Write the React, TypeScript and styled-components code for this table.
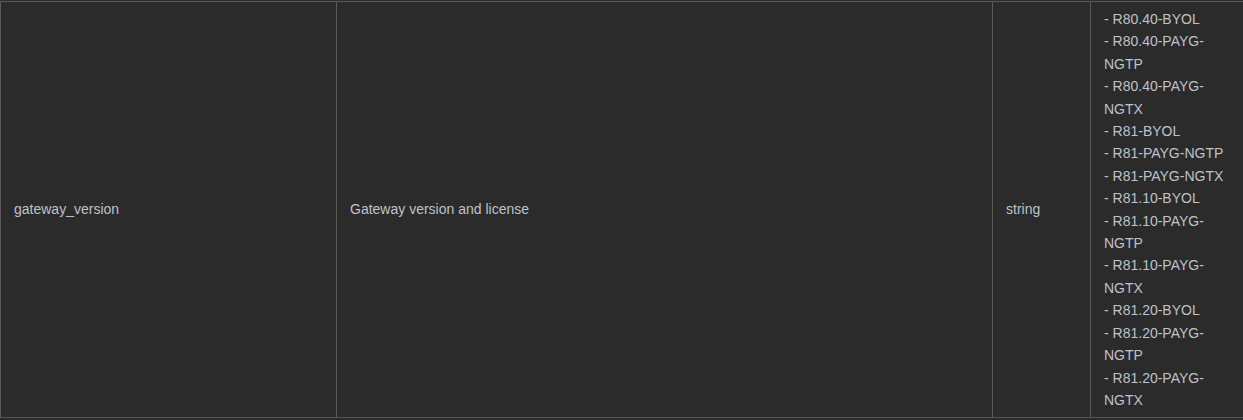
import React from "react";
import styled, { createGlobalStyle } from "styled-components";

const Global = createGlobalStyle`
  html, body {
    margin: 0;
    padding: 0;
    background: #2b2b2b;
    overflow: hidden;
  }
  body {
    padding: 1px 0 0 0;
    font-family: "Liberation Sans", Arial, sans-serif;
  }
`;

const Table = styled.table`
  border-collapse: collapse;
  table-layout: fixed;
  width: 1253px;
  background: #2b2b2b;
  font-size: 14px;
  line-height: 22.4px;
  color: #bec2ca;
`;

const Cell = styled.td<{ $w: number }>`
  width: ${(p) => p.$w}px;
  border: 1px solid #585858;
  padding: 6px 13px;
  vertical-align: middle;
  text-align: left;
`;

const Line = styled.div`
  display: block;
`;

const values = [
  "R80.40-BYOL",
  "R80.40-PAYG-NGTP",
  "R80.40-PAYG-NGTX",
  "R81-BYOL",
  "R81-PAYG-NGTP",
  "R81-PAYG-NGTX",
  "R81.10-BYOL",
  "R81.10-PAYG-NGTP",
  "R81.10-PAYG-NGTX",
  "R81.20-BYOL",
  "R81.20-PAYG-NGTP",
  "R81.20-PAYG-NGTX",
];

export default function App() {
  return (
    <>
      <Global />
      <Table>
        <tbody>
          <tr>
            <Cell $w={309}>gateway_version</Cell>
            <Cell $w={629}>Gateway version and license</Cell>
            <Cell $w={71}>string</Cell>
            <Cell $w={135}>
              {values.map((v) => (
                <Line key={v}>- {v}</Line>
              ))}
            </Cell>
          </tr>
        </tbody>
      </Table>
    </>
  );
}
